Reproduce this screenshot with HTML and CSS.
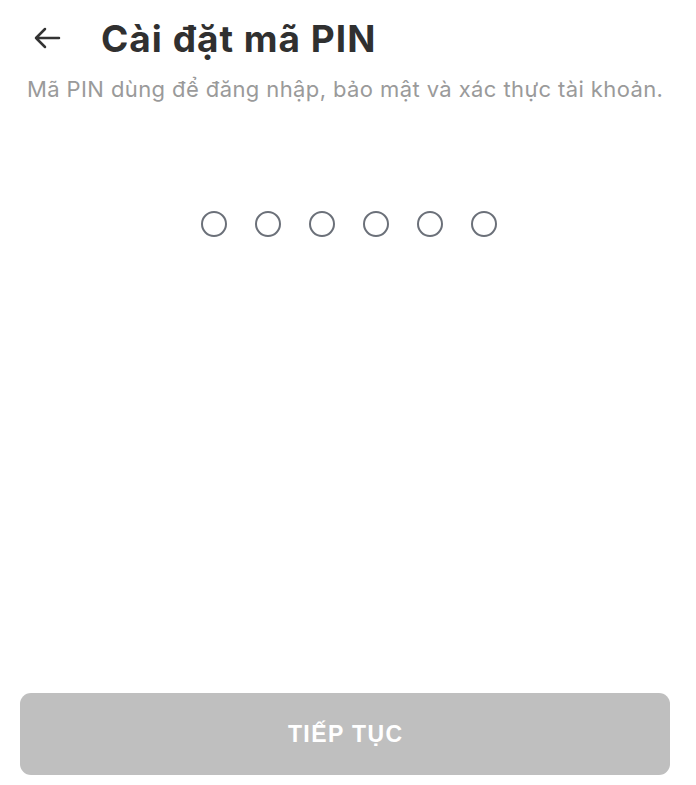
FILE: index.html
```html
<!DOCTYPE html>
<html lang="vi">
<head>
<meta charset="UTF-8">
<meta name="viewport" content="width=device-width, initial-scale=1.0">
<title>Cài đặt mã PIN</title>
<link rel="stylesheet" href="styles.css">
</head>
<body>
<div class="screen">
  <div class="header">
    <svg class="back" width="28" height="24" viewBox="0 0 28 24">
      <path d="M26 12H3M12 3L3 12l9 9" fill="none" stroke="#333" stroke-width="2.5" stroke-linecap="round" stroke-linejoin="round"/>
    </svg>
    <h1 class="title">Cài đặt mã PIN</h1>
  </div>
  <p class="subtitle">Mã PIN dùng để đăng nhập, bảo mật và xác thực tài khoản.</p>
  <div class="pin-dots">
    <span class="dot"></span>
    <span class="dot"></span>
    <span class="dot"></span>
    <span class="dot"></span>
    <span class="dot"></span>
    <span class="dot"></span>
  </div>
  <div class="spacer"></div>
  <button class="next-btn">TIẾP TỤC</button>
</div>
</body>
</html>
```

FILE: styles.css
```css
body, html {
  margin: 0;
  padding: 0;
  height: 100%;
  background: #fff;
  font-family: Inter, "Noto Sans", sans-serif;
}
.screen {
  height: 785px;
  display: flex;
  flex-direction: column;
  padding: 0 26px 0 20px;
  box-sizing: border-box;
}
.header {
  display: flex;
  align-items: center;
  height: 76px;
  padding-left: 13px;
}
.back {
  margin-right: 40px;
}
.title {
  margin: 0;
  font-size: 37px;
  font-weight: 700;
  color: #303030;
  letter-spacing: 1px;
}
.subtitle {
  margin: 0;
  padding-left: 7px;
  font-size: 22px;
  line-height: 26px;
  color: #9a9a9a;
  letter-spacing: 0.4px;
  white-space: nowrap;
}
.pin-dots {
  display: flex;
  justify-content: center;
  gap: 28px;
  margin-top: 109px;
  padding-left: 8px;
}
.dot {
  width: 22px;
  height: 22px;
  border: 2px solid #6b7079;
  border-radius: 50%;
}
.spacer {
  flex: 1;
}
.next-btn {
  height: 82px;
  margin-bottom: 10px;
  padding-top: 2px;
  border: none;
  border-radius: 11px;
  background: #bfbfbf;
  color: #fff;
  font-family: "Liberation Sans", Arial, sans-serif;
  font-size: 23px;
  font-weight: 700;
  letter-spacing: 1.4px;
  text-indent: 1.4px;
}
```
